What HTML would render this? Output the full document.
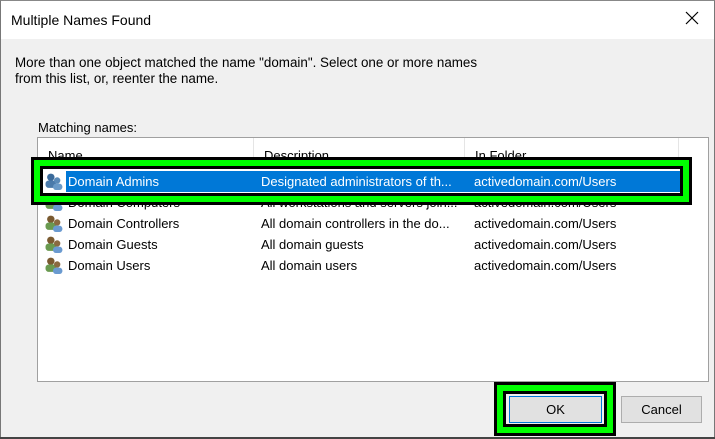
<!DOCTYPE html>
<html><head><style>
*{margin:0;padding:0;box-sizing:border-box}
body{width:715px;height:439px;overflow:hidden;background:#f0f0f0;font-family:"Liberation Sans",sans-serif;font-size:13px;color:#000;position:relative}
.win{position:absolute;left:0;top:0;width:715px;height:438px;border-left:1px solid #777;border-right:1px solid #777;border-top:1px solid #888;background:#f0f0f0}
.title{position:absolute;left:0;top:0;width:100%;height:38px;background:#fff}
.title span{position:absolute;left:10px;top:11px;font-size:14px}
.x{position:absolute;left:684px;top:10px}
.abs{position:absolute;white-space:nowrap}
.list{position:absolute;left:36px;top:136px;width:672px;height:245px;background:#fff;border:1px solid #a0a0a0}
.hdr{position:absolute;top:0;height:24px;border-right:1px solid #e5e5e5;padding:10px 0 0 10px;color:#000}
.row{position:absolute;left:0;height:21px;width:670px}
.row span{position:absolute;top:3px}
.ico{position:absolute;left:6px;top:1px;width:20px;height:18px}
.btn{position:absolute;top:395px;height:27px;background:#e1e1e1;border:1px solid #adadad;text-align:center;line-height:25px}
.gbox{position:absolute;border:3px solid #000;background:transparent}
.gbox>div{position:absolute;inset:0;border:6px solid #0f0}
.gbox>div>div{position:absolute;inset:0;border:3px solid #000}
.bot{position:absolute;left:0;top:437px;width:715px;height:2px;background:#444}
</style></head><body>
<div class="win">
<div class="title"><span>Multiple Names Found</span>
<svg class="x" width="14" height="14"><path d="M1 1L13 13M13 1L1 13" stroke="#000" stroke-width="1.2"/></svg></div>
<div class="abs" style="left:14px;top:54px;font-size:13.4px">More than one object matched the name "domain". Select one or more names</div>
<div class="abs" style="left:14px;top:70px;font-size:13.4px">from this list, or, reenter the name.</div>
<div class="abs" style="left:37px;top:119px">Matching names:</div>
<div class="list">
<div class="hdr" style="left:0;width:216px">Name</div>
<div class="hdr" style="left:216px;width:211px">Description</div>
<div class="hdr" style="left:427px;width:214px">In Folder</div>
<div style="position:absolute;left:28px;top:33px;width:614px;height:21px;background:#0078d7"></div>
<div class="row" style="top:33px;color:#fff"><svg class="ico" viewBox="0 0 18 17"><circle cx="6" cy="5" r="3.5" fill="#3a6a9a"/><rect x="1" y="8" width="10" height="7" rx="3" fill="#4a7aaa"/><circle cx="12" cy="8" r="3" fill="#5a8ab8"/><rect x="8" y="11" width="9" height="6" rx="3" fill="#6a9ac8"/></svg><span style="left:30px">Domain Admins</span><span style="left:223px">Designated administrators of th...</span><span style="left:436px">activedomain.com/Users</span></div>
<div class="row" style="top:54px"><svg class="ico" viewBox="0 0 18 17"><circle cx="6" cy="5" r="3.5" fill="#7a5a30"/><rect x="1" y="8" width="10" height="7" rx="3" fill="#6a9a50"/><circle cx="12" cy="8" r="3" fill="#8a6a40"/><rect x="8" y="11" width="9" height="6" rx="3" fill="#6a9ad0"/></svg><span style="left:30px">Domain Computers</span><span style="left:223px">All workstations and servers join...</span><span style="left:436px">activedomain.com/Users</span></div>
<div class="row" style="top:75px"><svg class="ico" viewBox="0 0 18 17"><circle cx="6" cy="5" r="3.5" fill="#7a5a30"/><rect x="1" y="8" width="10" height="7" rx="3" fill="#6a9a50"/><circle cx="12" cy="8" r="3" fill="#8a6a40"/><rect x="8" y="11" width="9" height="6" rx="3" fill="#6a9ad0"/></svg><span style="left:30px">Domain Controllers</span><span style="left:223px">All domain controllers in the do...</span><span style="left:436px">activedomain.com/Users</span></div>
<div class="row" style="top:96px"><svg class="ico" viewBox="0 0 18 17"><circle cx="6" cy="5" r="3.5" fill="#7a5a30"/><rect x="1" y="8" width="10" height="7" rx="3" fill="#6a9a50"/><circle cx="12" cy="8" r="3" fill="#8a6a40"/><rect x="8" y="11" width="9" height="6" rx="3" fill="#6a9ad0"/></svg><span style="left:30px">Domain Guests</span><span style="left:223px">All domain guests</span><span style="left:436px">activedomain.com/Users</span></div>
<div class="row" style="top:117px"><svg class="ico" viewBox="0 0 18 17"><circle cx="6" cy="5" r="3.5" fill="#7a5a30"/><rect x="1" y="8" width="10" height="7" rx="3" fill="#6a9a50"/><circle cx="12" cy="8" r="3" fill="#8a6a40"/><rect x="8" y="11" width="9" height="6" rx="3" fill="#6a9ad0"/></svg><span style="left:30px">Domain Users</span><span style="left:223px">All domain users</span><span style="left:436px">activedomain.com/Users</span></div>
</div>
<div class="gbox" style="left:30px;top:156px;width:661px;height:48px"><div><div></div></div></div>
<div class="btn" style="left:508px;width:93px;border:1px solid #0078d7;background:#e1e1e1">OK</div>
<div class="btn" style="left:620px;width:81px">Cancel</div>
<div class="gbox" style="left:493px;top:381px;width:122px;height:54px"><div><div></div></div></div>
</div>
<div class="bot"></div>
</body></html>
